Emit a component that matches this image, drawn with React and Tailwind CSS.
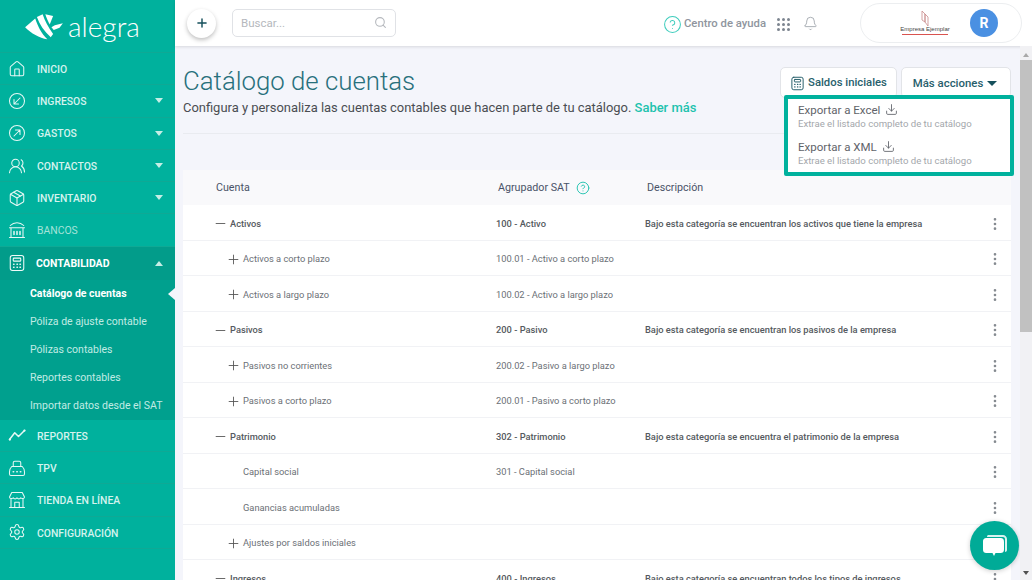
import React from "react";
import {
  House,
  UsersRound,
  Package,
  Settings,
  Search,
  Bell,
  Download,
  EllipsisVertical,
  Plus,
  Minus,
  CircleHelp,
} from "lucide-react";

// icons the packages don't have in this shape
function Ico({ size, strokeWidth, className, children }) {
  return (
    <svg width={size} height={size} viewBox="0 0 24 24" fill="none" stroke="currentColor" strokeWidth={strokeWidth} strokeLinecap="round" strokeLinejoin="round" className={className}>
      {children}
    </svg>
  );
}

const InIcon = (p) => (
  <Ico {...p}>
    <circle cx="12" cy="12" r="10" />
    <path d="M16 8 L8 16 M8 10 V16 H14" />
  </Ico>
);

const OutIcon = (p) => (
  <Ico {...p}>
    <circle cx="12" cy="12" r="10" />
    <path d="M8 16 L16 8 M10 8 H16 V14" />
  </Ico>
);

const BankIcon = (p) => (
  <Ico {...p}>
    <path d="M3 6 C8 1 16 1 21 6" />
    <path d="M2 9 H22 M4 9 V22 H20 V9 M2 22 H22" />
    <path d="M8 14 V18 M12 14 V18 M16 14 V18" strokeWidth="2" />
  </Ico>
);

const CalcIcon = (p) => (
  <Ico {...p}>
    <rect x="3" y="2" width="18" height="20" rx="3" />
    <rect x="7" y="5.5" width="10" height="4" rx="1" />
    <path d="M7.5 13.5 H8 M12 13.5 H12.5 M16 13.5 H16.5 M7.5 17.5 H8 M12 17.5 H12.5 M16 17.5 H16.5" strokeWidth="2" />
  </Ico>
);

const ChartIcon = (p) => (
  <Ico {...p}>
    <path d="M2 18 L9 9 L14 14 L22 6" strokeWidth="2" />
    <circle cx="2.5" cy="18" r="0.8" fill="currentColor" />
    <circle cx="22" cy="6" r="0.8" fill="currentColor" />
  </Ico>
);

const PosIcon = (p) => (
  <Ico {...p}>
    <path d="M7 10 V5 C7 3.5 8 3 9 3 H15 C16 3 17 3.5 17 5 V10" />
    <path d="M5 10 H19 C21 12 22 14 22 17 V20 C22 21 21 22 20 22 H4 C3 22 2 21 2 20 V17 C2 14 3 12 5 10Z" />
    <path d="M7 17 H7.5 M11.8 17 H12.3 M16.5 17 H17" strokeWidth="2.2" />
  </Ico>
);

const StoreIcon = (p) => (
  <Ico {...p}>
    <path d="M5 2 H19 L22 8 C22 10 19 11 17 9 C15.5 11 13.5 11 12 9 C10.5 11 8.5 11 7 9 C5 11 2 10 2 8 Z" />
    <path d="M4 11 V22 H20 V11 M2 22 H22" />
    <path d="M9 22 V15 H15 V22" />
  </Ico>
);

const topMenu = [
  { label: "INICIO", icon: House },
  { label: "INGRESOS", icon: InIcon, caret: true },
  { label: "GASTOS", icon: OutIcon, caret: true },
  { label: "CONTACTOS", icon: UsersRound, caret: true },
  { label: "INVENTARIO", icon: Package, caret: true },
  { label: "BANCOS", icon: BankIcon, dim: true },
];

const subMenu = [
  "Póliza de ajuste contable",
  "Pólizas contables",
  "Reportes contables",
  "Importar datos desde el SAT",
];

const bottomMenu = [
  { label: "REPORTES", icon: ChartIcon },
  { label: "TPV", icon: PosIcon },
  { label: "TIENDA EN LÍNEA", icon: StoreIcon },
  { label: "CONFIGURACIÓN", icon: Settings },
];

const rows = [
  { name: "Activos", sat: "100 - Activo", desc: "Bajo esta categoría se encuentran los activos que tiene la empresa", head: true },
  { name: "Activos a corto plazo", sat: "100.01 - Activo a corto plazo", plus: true },
  { name: "Activos a largo plazo", sat: "100.02 - Activo a largo plazo", plus: true },
  { name: "Pasivos", sat: "200 - Pasivo", desc: "Bajo esta categoría se encuentran los pasivos de la empresa", head: true },
  { name: "Pasivos no corrientes", sat: "200.02 - Pasivo a largo plazo", plus: true },
  { name: "Pasivos a corto plazo", sat: "200.01 - Pasivo a corto plazo", plus: true },
  { name: "Patrimonio", sat: "302 - Patrimonio", desc: "Bajo esta categoría se encuentra el patrimonio de la empresa", head: true },
  { name: "Capital social", sat: "301 - Capital social" },
  { name: "Ganancias acumuladas", sat: "" },
  { name: "Ajustes por saldos iniciales", sat: "", plus: true },
  { name: "Ingresos", sat: "400 - Ingresos", desc: "Bajo esta categoría se encuentran todos los tipos de ingresos", head: true },
];

function Caret({ up }) {
  return (
    <span
      className={
        up
          ? "ml-auto mr-3 border-x-[4.5px] border-b-[5px] border-x-transparent border-b-[#c5eee6]"
          : "ml-auto mr-3 border-x-[4.5px] border-t-[5px] border-x-transparent border-t-[#c5eee6]"
      }
    />
  );
}

function MenuItem({ item }) {
  const Icon = item.icon;
  return (
    <div className="flex h-[32.3px] items-center border-b border-[#0fa995] pl-[8px]">
      <Icon size={18} strokeWidth={1.4} className="text-[#e6f8f5]" />
      <span className={item.dim ? "ml-[11px] pt-[2px] text-[10.4px] text-[#a5e3d9]" : "ml-[11px] pt-[2px] text-[10.4px] font-medium text-[#d5f3ee]"}>
        {item.label}
      </span>
      {item.caret && <Caret />}
    </div>
  );
}

function Sidebar() {
  return (
    <aside className="flex h-full w-[175px] shrink-0 flex-col bg-[#00b19d] font-['Roboto',sans-serif]">
      {/* Logo */}
      <div className="flex h-[53px] shrink-0 items-center border-b border-[#0fa995] pl-[25px]">
        <svg width="39" height="27" viewBox="20 8 115 80" className="shrink-0">
          <path d="M20 50 L50 24 C58 48 68 68 86 86 C62 82 38 68 20 50Z" fill="#fff" />
          <path d="M55 20 L72 12 C78 30 88 50 103 70 L96 80 C76 62 63 42 55 20Z" fill="#fff" />
          <path d="M80 12 L103 17 L93 42 C87 32 83 22 80 12Z" fill="#fff" />
          <path d="M108 44 L132 38 L122 52 L105 58 L98 50Z" fill="#fff" />
        </svg>
        <span className="ml-[4px] font-['Lato',sans-serif] text-[28px] font-light leading-none text-white">alegra</span>
      </div>

      {topMenu.map((item) => (
        <MenuItem key={item.label} item={item} />
      ))}

      {/* Contabilidad abierto */}
      <div className="bg-[#00a08e]">
        <div className="flex h-[33px] items-center bg-[#029c8a] pl-[8px]">
          <CalcIcon size={18} strokeWidth={1.4} className="text-[#f0fbf9]" />
          <span className="ml-[10px] pt-[1px] text-[10.5px] font-bold text-white">CONTABILIDAD</span>
          <Caret up />
        </div>
        <div className="text-[10.5px] text-[#c0ebe4]">
          <div className="relative flex h-[28px] items-center pl-[30px] font-bold text-white">
            Catálogo de cuentas
            <span className="absolute right-0 top-[8px] border-y-[6px] border-r-[7px] border-y-transparent border-r-[#f4f5fb]" />
          </div>
          {subMenu.map((s) => (
            <div key={s} className="flex h-[28px] items-center whitespace-nowrap pl-[30px]">
              {s}
            </div>
          ))}
        </div>
      </div>

      {bottomMenu.map((item) => (
        <MenuItem key={item.label} item={item} />
      ))}
    </aside>
  );
}

function Topbar() {
  return (
    <header className="flex h-[46px] shrink-0 items-center bg-white pl-[12px] shadow-[0_1px_3px_rgba(0,0,0,0.12)]">
      <button className="flex h-[29px] w-[29px] items-center justify-center rounded-full bg-white shadow-[0_2px_4px_rgba(0,0,0,0.25)]">
        <Plus size={14} strokeWidth={2.5} className="text-[#16505c]" />
      </button>
      <div className="ml-[16px] flex h-[28px] w-[164px] items-center justify-between rounded-[5px] border border-[#e0e2e6] pl-[8px] pr-[8px]">
        <span className="pt-[1px] text-[11.5px] text-[#b5b8bd]">Buscar...</span>
        <Search size={13} strokeWidth={2} className="mb-[2px] text-[#b5b8bd]" />
      </div>

      <CircleHelp size={19} strokeWidth={1.3} className="ml-[267px] mt-[2px] text-[#3fcdbd]" />
      <span className="ml-[2px] mt-[2px] whitespace-nowrap text-[11.3px] font-medium text-[#8f959e]">Centro de ayuda</span>
      {/* Rejilla de apps */}
      <div className="ml-[11px] mt-[2px] grid grid-cols-3 gap-[2px]">
        {[...Array(9)].map((_, i) => (
          <span key={i} className="h-[3px] w-[3px] rounded-full bg-[#7d8590]" />
        ))}
      </div>
      <Bell size={15} strokeWidth={1.2} className="ml-[13px] text-[#8f959e]" />

      {/* Empresa */}
      <div className="ml-[42px] flex h-[40px] w-[162px] shrink-0 items-center rounded-full border border-[#eceef0] pl-[39px]">
        <div className="flex w-[50px] flex-col items-center">
          <svg width="8" height="15" viewBox="0 0 8 15" className="-mb-[2px]">
            <path d="M1 0 L1 9 L4 11 L4 3 Z M4 3 L4 11 L7 15 L7 6 Z" fill="none" stroke="#c98a8a" strokeWidth="0.8" />
          </svg>
          <span className="whitespace-nowrap font-['Liberation_Sans',sans-serif] text-[6px] leading-[10px] text-[#444]">Empresa Ejemplar</span>
          <span className="h-px w-[46px] bg-[#d9534f]" />
        </div>
        <span className="ml-[20px] flex h-[28px] w-[28px] items-center justify-center rounded-full bg-[#4a90e2] text-[14px] font-bold text-white">R</span>
      </div>
    </header>
  );
}

function AccountRow({ row }) {
  return (
    <div className="grid h-[35.5px] grid-cols-[313px_149px_1fr_32px] items-center border-b border-[#f1f2f5] bg-white pt-[3px] text-[9.3px]">
      <div className={row.head ? "flex items-center pl-[30px]" : row.plus ? "flex items-center pl-[43px]" : "flex items-center pl-[60px]"}>
        {row.head && <Minus size={15} strokeWidth={1.4} className="mr-[2px] text-[#555]" />}
        {row.plus && <Plus size={15} strokeWidth={1.4} className="mr-[2px] text-[#555]" />}
        <span className={row.head ? "font-medium text-[#555a60]" : "text-[#6b7076]"}>{row.name}</span>
      </div>
      <span className={row.head ? "font-medium text-[#555a60]" : "text-[#6b7076]"}>{row.sat}</span>
      <span className="whitespace-nowrap font-medium text-[#555a60]">{row.desc}</span>
      <EllipsisVertical size={16} strokeWidth={2} className="justify-self-center text-[#858a90]" />
    </div>
  );
}

function Content() {
  return (
    <main className="relative min-w-0 flex-1 overflow-hidden px-[8px]">
      <div className="flex h-[88px] items-start justify-between border-b border-[#e9ebf0]">
        <div className="pt-[19px]">
          <h1 className="text-[25.8px] font-light leading-[32px] text-[#28707c]">Catálogo de cuentas</h1>
          <p className="mt-[1px] text-[12.95px] leading-[20px] text-[#4a4d52]">
            Configura y personaliza las cuentas contables que hacen parte de tu catálogo.{" "}
            <span className="font-medium text-[#20c2ae]">Saber más</span>
          </p>
        </div>
      </div>

      {/* Botones */}
      <div className="absolute right-[9px] top-[21px] flex gap-[4px]">
        <button className="flex h-[31px] w-[117px] items-center justify-center gap-[3px] rounded-[5px] border border-[#e2e4e8] bg-white pt-[2px] text-[11.3px] font-medium text-[#28606c]">
          <CalcIcon size={15} strokeWidth={1.6} />
          Saldos iniciales
        </button>
        <button className="flex h-[31px] w-[110px] items-center justify-center gap-[4px] rounded-[5px] border border-[#e2e4e8] bg-white pr-[2px] pt-[2px] text-[11.4px] font-medium text-[#28606c]">
          Más acciones
          <span className="border-x-[5px] border-t-[5px] border-x-transparent border-t-[#16505c]" />
        </button>
      </div>

      {/* Menu de exportar */}
      <div className="absolute right-[6px] top-[49px] z-10 h-[81px] w-[230px] rounded-[2px] border-[4px] border-[#00b19d] bg-white pl-[10px] pt-[3px]">
        <div className="flex items-center gap-[5px] text-[11.5px] leading-[17px] text-[#5f6369]">
          Exportar a Excel <Download size={13} strokeWidth={1.6} className="mb-[2px]" />
        </div>
        <p className="-mt-[1px] text-[9.6px] leading-[12px] text-[#a4a7ac]">Extrae el listado completo de tu catálogo</p>
        <div className="mt-[8.5px] flex items-center gap-[5px] text-[11.5px] leading-[17px] text-[#5f6369]">
          Exportar a XML <Download size={13} strokeWidth={1.6} className="mb-[2px]" />
        </div>
        <p className="-mt-[1px] text-[9.6px] leading-[12px] text-[#a4a7ac]">Extrae el listado completo de tu catálogo</p>
      </div>

      {/* Tabla */}
      <div className="mt-[36px] w-[828px]">
        <div className="grid h-[35px] grid-cols-[315px_149px_1fr] items-center bg-[#f9f9fb] pt-[1px] text-[10.7px] text-[#4a5368]">
          <span className="pl-[33px]">Cuenta</span>
          <span className="flex items-center gap-[6px]">
            Agrupador SAT <CircleHelp size={14} strokeWidth={1.6} className="text-[#20c2ae]" />
          </span>
          <span>Descripción</span>
        </div>
        {rows.map((row) => (
          <AccountRow key={row.name} row={row} />
        ))}
      </div>

      {/* Chat */}
      <button className="absolute bottom-[10px] right-[1px] z-10 flex h-[49px] w-[49px] items-center justify-center rounded-full bg-[#00ab97] shadow-[0_1px_5px_rgba(0,0,0,0.2)]">
        <svg width="26" height="24" viewBox="0 0 26 24">
          <path d="M6 1 H21 C23 1 25 3 25 5 V16 C25 17 24 18 23 18 V5 C23 3.8 22 3 21 3 H5 C5 2 5.5 1 6 1Z" fill="#fff" opacity="0.85" />
          <path d="M5 4 H18 C21 4 22 5 22 8 V15 C22 18 21 19 18 19 H13.5 L12 22 L10.5 19 H5 C2 19 1 18 1 15 V8 C1 5 2 4 5 4Z" fill="#fff" />
        </svg>
      </button>
    </main>
  );
}

function Scrollbar() {
  return (
    <div className="flex w-[12px] shrink-0 flex-col items-center bg-[#f1f1f4]">
      <span className="mt-[7px] border-x-[3.5px] border-b-[4px] border-x-transparent border-b-[#a8a8a8]" />
      <span className="mt-[3px] h-[272px] w-full bg-[#c1c1c1]" />
      <span className="mb-[5px] mt-auto border-x-[3.5px] border-t-[4px] border-x-transparent border-t-[#505050]" />
    </div>
  );
}

export default function App() {
  return (
    <div className="flex h-[580px] w-[1032px] overflow-hidden bg-[#f4f5fb] font-['Roboto',sans-serif]">
      <Sidebar />
      <div className="flex min-w-0 flex-1 flex-col">
        <Topbar />
        <div className="flex min-h-0 flex-1">
          <Content />
          <Scrollbar />
        </div>
      </div>
    </div>
  );
}
